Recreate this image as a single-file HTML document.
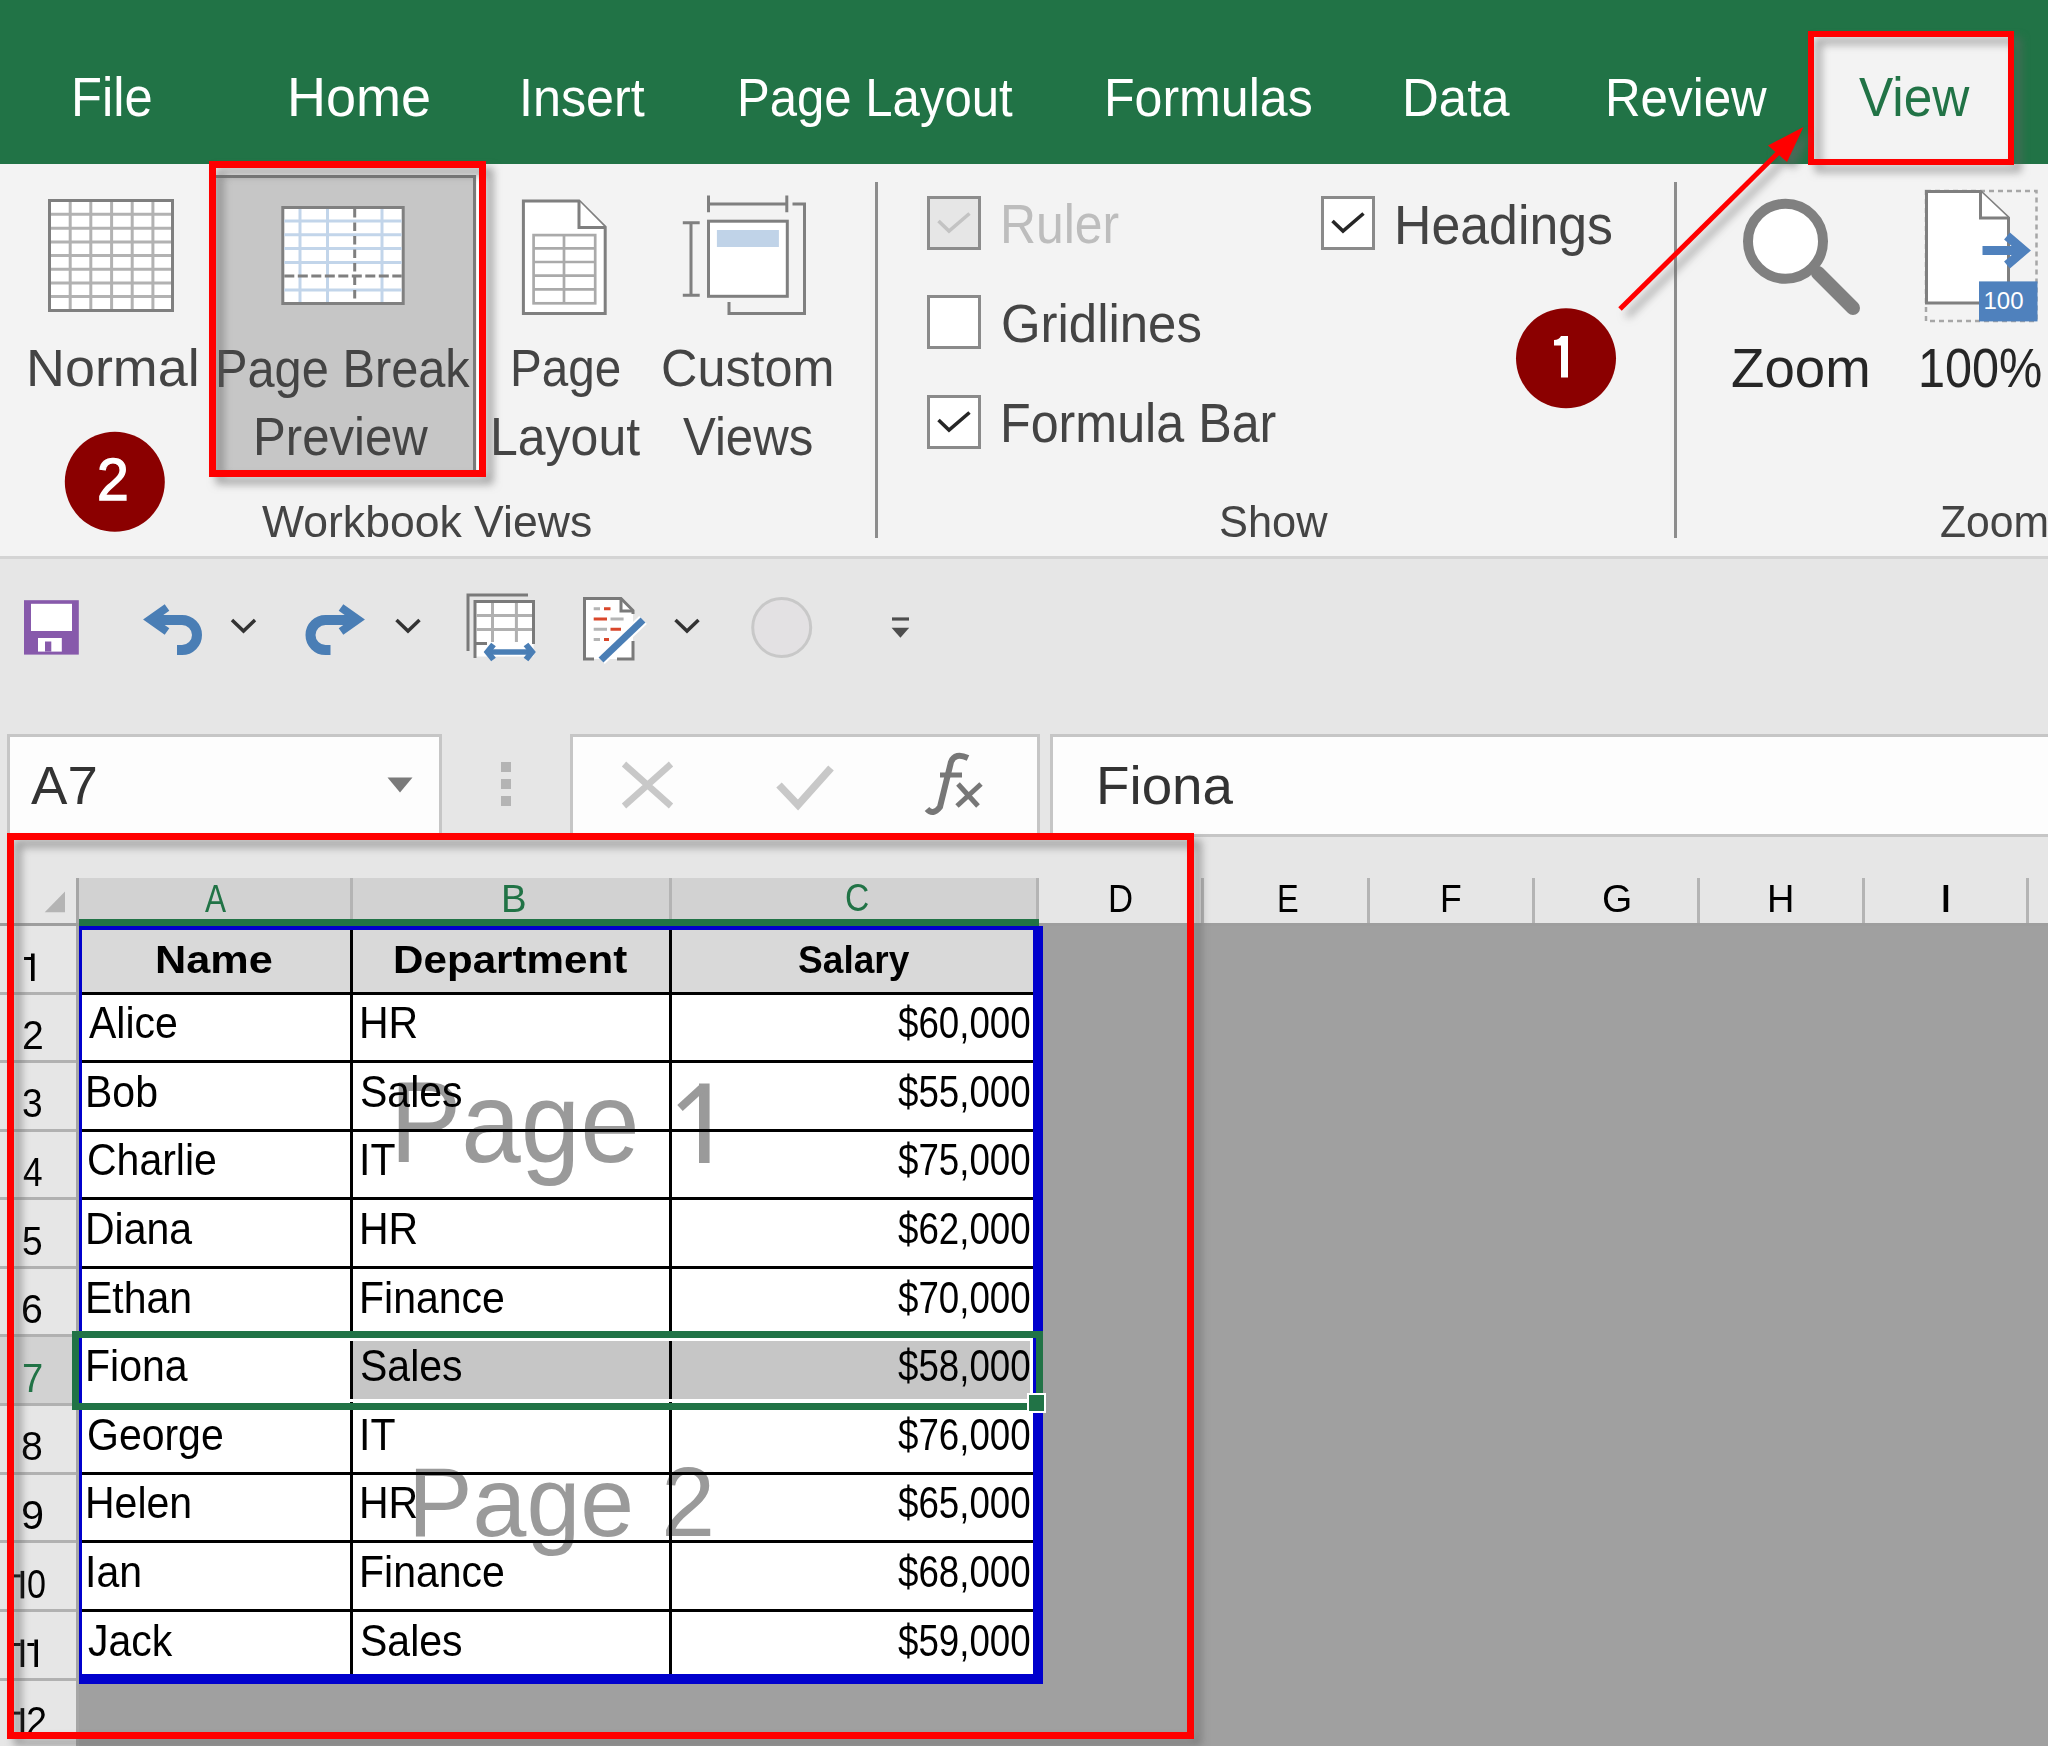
<!DOCTYPE html><html><head><meta charset="utf-8"><style>
html,body{margin:0;padding:0}
body{width:2048px;height:1746px;position:relative;overflow:hidden;background:#a0a0a0;font-family:'Liberation Sans',sans-serif}
.r{position:absolute}
.t{position:absolute;white-space:pre;transform-origin:0 0;font-family:'Liberation Sans',sans-serif}
svg{position:absolute;overflow:visible}
</style></head><body>
<div class=r style="left:0px;top:0px;width:2048px;height:164px;background:#217346;"></div>
<div class=r style="left:0px;top:164px;width:2048px;height:392px;background:#f3f3f3;"></div>
<div class=r style="left:0px;top:556px;width:2048px;height:3px;background:#d4d4d4;"></div>
<div class=r style="left:0px;top:559px;width:2048px;height:367px;background:#e6e6e6;"></div>
<div class=r style="left:1814px;top:37px;width:195px;height:127px;background:#f3f3f3;"></div>
<div class=r style="left:216px;top:175px;width:260px;height:295px;background:#c6c6c6;border-top:3px solid #7a7a7a;border-right:3px solid #7a7a7a;box-sizing:border-box"></div>
<div class=r style="left:476.5px;top:175px;width:3.5px;height:295px;background:#ffffff;"></div>
<div class=r style="left:875px;top:182px;width:3px;height:356px;background:#8c8c8c;"></div>
<div class=r style="left:1674px;top:182px;width:3px;height:356px;background:#8c8c8c;"></div>
<svg style="left:0;top:0" width="2048" height="600"><rect x="49.5" y="200.5" width="123" height="110" fill="#fff" stroke="#7f7f7f" stroke-width="3"/><line x1="70.2" y1="202" x2="70.2" y2="309" stroke="#b2b2b2" stroke-width="3"/><line x1="90.8" y1="202" x2="90.8" y2="309" stroke="#b2b2b2" stroke-width="3"/><line x1="111.6" y1="202" x2="111.6" y2="309" stroke="#b2b2b2" stroke-width="3"/><line x1="132.2" y1="202" x2="132.2" y2="309" stroke="#b2b2b2" stroke-width="3"/><line x1="152.9" y1="202" x2="152.9" y2="309" stroke="#b2b2b2" stroke-width="3"/><line x1="51" y1="214.2" x2="171" y2="214.2" stroke="#b2b2b2" stroke-width="3"/><line x1="51" y1="228.3" x2="171" y2="228.3" stroke="#b2b2b2" stroke-width="3"/><line x1="51" y1="241.9" x2="171" y2="241.9" stroke="#b2b2b2" stroke-width="3"/><line x1="51" y1="255.6" x2="171" y2="255.6" stroke="#b2b2b2" stroke-width="3"/><line x1="51" y1="269.3" x2="171" y2="269.3" stroke="#b2b2b2" stroke-width="3"/><line x1="51" y1="282.9" x2="171" y2="282.9" stroke="#b2b2b2" stroke-width="3"/><line x1="51" y1="296.6" x2="171" y2="296.6" stroke="#b2b2b2" stroke-width="3"/></svg>
<svg style="left:0;top:0" width="2048" height="600"><rect x="282.8" y="207.5" width="120.39999999999998" height="96" fill="#fff" stroke="#808080" stroke-width="3"/><line x1="300" y1="209" x2="300" y2="302" stroke="#c2d5ea" stroke-width="3"/><line x1="327.5" y1="209" x2="327.5" y2="302" stroke="#c2d5ea" stroke-width="3"/><line x1="382" y1="209" x2="382" y2="302" stroke="#c2d5ea" stroke-width="3"/><line x1="284.3" y1="221" x2="401.7" y2="221" stroke="#c2d5ea" stroke-width="3"/><line x1="284.3" y1="234.8" x2="401.7" y2="234.8" stroke="#c2d5ea" stroke-width="3"/><line x1="284.3" y1="248.4" x2="401.7" y2="248.4" stroke="#c2d5ea" stroke-width="3"/><line x1="284.3" y1="262.5" x2="401.7" y2="262.5" stroke="#c2d5ea" stroke-width="3"/><line x1="284.3" y1="290" x2="401.7" y2="290" stroke="#c2d5ea" stroke-width="3"/><line x1="354.7" y1="209" x2="354.7" y2="302" stroke="#7f7f7f" stroke-width="3" stroke-dasharray="8.5 5"/><line x1="284.3" y1="276" x2="401.7" y2="276" stroke="#7f7f7f" stroke-width="3" stroke-dasharray="10 3.5"/></svg>
<svg style="left:0;top:0" width="2048" height="600"><path d="M523.4 200.9 H579 L605.2 227 V313.5 H523.4 Z" fill="#fff" stroke="#7f7f7f" stroke-width="3"/><path d="M579 200.9 V227.5 H605.2" fill="#fff" stroke="#7f7f7f" stroke-width="3"/><rect x="533.6" y="235.1" width="61.6" height="68.2" fill="#fff" stroke="#aaaaaa" stroke-width="2.7"/><line x1="564" y1="235" x2="564" y2="304" stroke="#aaaaaa" stroke-width="2.7"/><line x1="534" y1="248.3" x2="595" y2="248.3" stroke="#aaaaaa" stroke-width="2.7"/><line x1="534" y1="262" x2="595" y2="262" stroke="#aaaaaa" stroke-width="2.7"/><line x1="534" y1="275.6" x2="595" y2="275.6" stroke="#aaaaaa" stroke-width="2.7"/><line x1="534" y1="289.4" x2="595" y2="289.4" stroke="#aaaaaa" stroke-width="2.7"/></svg>
<svg style="left:0;top:0" width="2048" height="600"><path d="M707 204 H788.3 M708.5 195.6 V212.3 M786.8 195.6 V212.3" stroke="#7f7f7f" stroke-width="3" fill="none"/><path d="M691 221.25 V296.7 M682.8 222.7 H699.7 M682.8 295.2 H699.7" stroke="#7f7f7f" stroke-width="3" fill="none"/><path d="M792.5 204 H804.5 V313.5 H729 V302" stroke="#7f7f7f" stroke-width="3" fill="none"/><rect x="708.5" y="221.2" width="78.8" height="75.1" fill="#fff" stroke="#7f7f7f" stroke-width="3"/><rect x="716.9" y="230" width="62" height="17" fill="#c0d3e8"/></svg>
<svg style="left:926.6px;top:195.6px" width="55" height="55"><rect x="1.5" y="1.5" width="51" height="51" fill="#e6e6e6" stroke="#8c8c8c" stroke-width="3"/><path d="M11.5 25 L22 35 L42.5 17.5" fill="none" stroke="#c3c3c3" stroke-width="3.6"/></svg>
<svg style="left:926.6px;top:295.3px" width="55" height="55"><rect x="1.5" y="1.5" width="51" height="51" fill="#ffffff" stroke="#8a8a8a" stroke-width="3"/></svg>
<svg style="left:926.6px;top:395.4px" width="55" height="55"><rect x="1.5" y="1.5" width="51" height="51" fill="#ffffff" stroke="#8a8a8a" stroke-width="3"/><path d="M11.5 25 L22 35 L42.5 17.5" fill="none" stroke="#262626" stroke-width="3.6"/></svg>
<svg style="left:1321px;top:195.6px" width="55" height="55"><rect x="1.5" y="1.5" width="51" height="51" fill="#ffffff" stroke="#8a8a8a" stroke-width="3"/><path d="M11.5 25 L22 35 L42.5 17.5" fill="none" stroke="#262626" stroke-width="3.6"/></svg>
<svg style="left:0;top:0" width="2048" height="600"><circle cx="1785.5" cy="241.3" r="37.5" fill="#fff" stroke="#808080" stroke-width="10"/><line x1="1818" y1="273" x2="1853" y2="308" stroke="#808080" stroke-width="14" stroke-linecap="round"/></svg>
<svg style="left:0;top:0" width="2048" height="600">
<rect x="1926" y="191" width="110.5" height="130" fill="none" stroke="#a6a6a6" stroke-width="2.5" stroke-dasharray="5 4"/>
<path d="M1926.5 191.5 H1980.5 L2008.5 218 V303 H1926.5 Z" fill="#fff" stroke="#7f7f7f" stroke-width="3"/>
<path d="M1980.5 191.5 V218 H2008.5" fill="#fff" stroke="#7f7f7f" stroke-width="3"/>
<rect x="1979" y="281.4" width="58.5" height="40" fill="#4f81bd"/>
<path d="M1982.5 250.5 H2022" fill="none" stroke="#4f81bd" stroke-width="9"/><path d="M2007 236 L2024 250.5 L2007 265" fill="none" stroke="#4f81bd" stroke-width="9"/>
</svg>
<div class=t style="left:1983.5px;top:289px;font-size:24px;line-height:24px;color:#fff;font-weight:normal;transform:scaleX(1.0)">100</div>
<svg style="left:0;top:0" width="2048" height="700">
<rect x="24" y="600.2" width="54.8" height="54.4" fill="#8759ab"/><rect x="31" y="603.8" width="41" height="27.2" fill="#fff"/><rect x="38" y="638" width="23.8" height="13.6" fill="#fff"/><rect x="45" y="641.5" width="6.3" height="10.1" fill="#8759ab"/>
<path d="M152 620 H182 A15 15 0 0 1 182 650 H177" fill="none" stroke="#4a7eb5" stroke-width="10"/><path d="M167 607.5 L150 619.5 L167 631.5" fill="none" stroke="#4a7eb5" stroke-width="8"/>
<path d="M232 620 L243.5 631 L255 620" fill="none" stroke="#333" stroke-width="3.5"/>
<path d="M355.5 620 H325.5 A15 15 0 0 0 325.5 650 H330.5" fill="none" stroke="#4a7eb5" stroke-width="10"/><path d="M341 607.5 L358 619.5 L341 631.5" fill="none" stroke="#4a7eb5" stroke-width="8"/>
<path d="M396.5 620 L408 631 L419.5 620" fill="none" stroke="#333" stroke-width="3.5"/>
<path d="M468 651 V595 H528" fill="none" stroke="#7a7a7a" stroke-width="3"/>
<rect x="475" y="601.5" width="58.5" height="55" fill="#fff"/>
<path d="M475 658 V601.5 H533.5 V644" fill="none" stroke="#7a7a7a" stroke-width="3"/>
<path d="M492.5 603 V642 M516.4 603 V642 M476.5 615.5 H532 M476.5 629.4 H532" stroke="#b0b0b0" stroke-width="3"/>
<path d="M476 643.5 H487" stroke="#7a7a7a" stroke-width="3"/>
<path d="M490 652 H530" fill="none" stroke="#4a7eb5" stroke-width="5.5"/><path d="M493.5 644.5 L487.5 652 L493.5 659.5 M526 644.5 L532 652 L526 659.5" fill="none" stroke="#4a7eb5" stroke-width="6"/>
<path d="M584.5 598.5 H621 L633 610.5 V659 H584.5 Z" fill="#fff" stroke="none"/>
<path d="M594 659 H584.5 V598.5 H621 L633 610.5 V614" fill="none" stroke="#7a7a7a" stroke-width="3"/>
<path d="M633 641 V659 H617" fill="none" stroke="#7a7a7a" stroke-width="3"/>
<path d="M621 598.5 V611 H633" fill="none" stroke="#7a7a7a" stroke-width="3"/>
<path d="M593.7 608.7 H600 M610.5 619 H623.6 M593.7 629.3 H607 M593.7 639.5 H600" stroke="#b4b4b4" stroke-width="3"/>
<path d="M604 608.7 H610.5 M593.7 619 H607 M610.5 629.3 H621 M604 639.5 H609" stroke="#d9472b" stroke-width="3"/>
<path d="M601 660 L643 620" stroke="#ffffff" stroke-width="11"/>
<path d="M601 660 L643 620" stroke="#4a7eb5" stroke-width="7"/>
<path d="M675.5 620 L687 631 L698.5 620" fill="none" stroke="#333" stroke-width="3.5"/>
<circle cx="781.7" cy="627.5" r="29" fill="#e3e1e3" stroke="#c8c8c8" stroke-width="3"/>
<path d="M892 619 H909" stroke="#4d4d4d" stroke-width="3.2"/>
<path d="M891.6 627.7 H909.2 L900.4 637.7 Z" fill="#4d4d4d"/>
</svg>
<div class=r style="left:7px;top:734px;width:435px;height:103px;background:#fdfdfd;border:3px solid #c6c6c6;box-sizing:border-box"></div>
<svg style="left:0;top:0" width="2048" height="900"><path d="M387.5 777.5 H412.5 L400 792.5 Z" fill="#7a7a7a"/></svg>
<div class=r style="left:501px;top:761.5px;width:10px;height:10px;background:#b4b4b4;"></div><div class=r style="left:501px;top:778.8px;width:10px;height:10px;background:#b4b4b4;"></div><div class=r style="left:501px;top:796px;width:10px;height:10px;background:#b4b4b4;"></div>
<div class=r style="left:569.5px;top:734px;width:470px;height:103px;background:#fdfdfd;border:3px solid #c6c6c6;box-sizing:border-box"></div>
<div class=r style="left:1050px;top:734px;width:1010px;height:103px;background:#fdfdfd;border:3px solid #c6c6c6;box-sizing:border-box"></div>
<svg style="left:0;top:0" width="2048" height="900">
<path d="M624 764 L671 806 M671 764 L624 806" stroke="#c8c8c8" stroke-width="6.5"/>
<path d="M779 785 L798 805 L831 768" fill="none" stroke="#c8c8c8" stroke-width="7.5"/>
<path d="M927 809 Q933 816 940 807 L951 762 Q955 752 968 758" fill="none" stroke="#777" stroke-width="6"/>
<path d="M940 775 H962" stroke="#777" stroke-width="5"/>
<path d="M958 784 L978 806 M981 784 L957 806" stroke="#777" stroke-width="5"/>
</svg>
<div class=r style="left:0px;top:878px;width:76px;height:45px;background:#e6e6e6;"></div>
<svg style="left:0;top:0" width="200" height="1000"><path d="M44.7 912.3 H65 V891.6 Z" fill="#b4b4b4"/></svg>
<div class=r style="left:79px;top:878px;width:960px;height:45px;background:#d2d2d2;"></div>
<div class=r style="left:1039px;top:878px;width:1009px;height:45px;background:#e6e6e6;"></div>
<div class=r style="left:350px;top:878px;width:3px;height:45px;background:#b4b4b4;"></div>
<div class=r style="left:669px;top:878px;width:3px;height:45px;background:#b4b4b4;"></div>
<div class=r style="left:1036px;top:878px;width:3px;height:45px;background:#b4b4b4;"></div>
<div class=r style="left:1201px;top:878px;width:3px;height:45px;background:#b4b4b4;"></div>
<div class=r style="left:1367px;top:878px;width:3px;height:45px;background:#b4b4b4;"></div>
<div class=r style="left:1532px;top:878px;width:3px;height:45px;background:#b4b4b4;"></div>
<div class=r style="left:1697px;top:878px;width:3px;height:45px;background:#b4b4b4;"></div>
<div class=r style="left:1862px;top:878px;width:3px;height:45px;background:#b4b4b4;"></div>
<div class=r style="left:2026px;top:878px;width:3px;height:45px;background:#b4b4b4;"></div>
<div class=r style="left:76px;top:878px;width:3px;height:48px;background:#a6a6a6;"></div>
<div class=r style="left:0px;top:923px;width:2048px;height:3px;background:#9e9e9e;"></div>
<div class=r style="left:79px;top:919px;width:960px;height:7px;background:#217346;"></div>
<div class=r style="left:0px;top:926px;width:76px;height:820px;background:#e6e6e6;"></div>
<div class=r style="left:0px;top:1334.0px;width:76px;height:68.6px;background:#d2d2d2;"></div>
<div class=r style="left:0px;top:992px;width:76px;height:3px;background:#b1b1b1;"></div>
<div class=r style="left:0px;top:1060px;width:76px;height:3px;background:#b1b1b1;"></div>
<div class=r style="left:0px;top:1129px;width:76px;height:3px;background:#b1b1b1;"></div>
<div class=r style="left:0px;top:1197px;width:76px;height:3px;background:#b1b1b1;"></div>
<div class=r style="left:0px;top:1266px;width:76px;height:3px;background:#b1b1b1;"></div>
<div class=r style="left:0px;top:1334px;width:76px;height:3px;background:#b1b1b1;"></div>
<div class=r style="left:0px;top:1403px;width:76px;height:3px;background:#b1b1b1;"></div>
<div class=r style="left:0px;top:1472px;width:76px;height:3px;background:#b1b1b1;"></div>
<div class=r style="left:0px;top:1540px;width:76px;height:3px;background:#b1b1b1;"></div>
<div class=r style="left:0px;top:1609px;width:76px;height:3px;background:#b1b1b1;"></div>
<div class=r style="left:0px;top:1678px;width:76px;height:3px;background:#b1b1b1;"></div>
<div class=r style="left:76px;top:926px;width:3px;height:820px;background:#a6a6a6;"></div>
<div class=r style="left:82px;top:930px;width:951px;height:61.5px;background:#d9d9d9;"></div>
<div class=r style="left:82px;top:994.5px;width:951px;height:680px;background:#ffffff;"></div>
<div class=r style="left:353px;top:1341px;width:677px;height:58px;background:#c6c6c6;"></div>
<div class=t style="left:389.65px;top:1065.07px;font-size:115.217px;line-height:115.217px;color:#9a9a9a;font-weight:normal;transform:scaleX(0.9282);">Page</div>
<div class=t style="left:407.84px;top:1452.53px;font-size:98.551px;line-height:98.551px;color:#9a9a9a;font-weight:normal;transform:scaleX(0.9829);">Page 2</div>
<svg style="left:0;top:0" width="2048" height="1746"><path d="M699 1083.5 H709.6 V1163 H699 Z" fill="#9a9a9a"/><path d="M680 1108 L703 1087" stroke="#9a9a9a" stroke-width="8"/></svg>
<div class=r style="left:350px;top:930px;width:3px;height:744px;background:#000000;"></div>
<div class=r style="left:669.2px;top:930px;width:3px;height:744px;background:#000000;"></div>
<div class=r style="left:82px;top:992px;width:951px;height:3px;background:#000000;"></div>
<div class=r style="left:82px;top:1060px;width:951px;height:3px;background:#000000;"></div>
<div class=r style="left:82px;top:1129px;width:951px;height:3px;background:#000000;"></div>
<div class=r style="left:82px;top:1197px;width:951px;height:3px;background:#000000;"></div>
<div class=r style="left:82px;top:1266px;width:951px;height:3px;background:#000000;"></div>
<div class=r style="left:82px;top:1334px;width:951px;height:3px;background:#000000;"></div>
<div class=r style="left:82px;top:1403px;width:951px;height:3px;background:#000000;"></div>
<div class=r style="left:82px;top:1472px;width:951px;height:3px;background:#000000;"></div>
<div class=r style="left:82px;top:1540px;width:951px;height:3px;background:#000000;"></div>
<div class=r style="left:82px;top:1609px;width:951px;height:3px;background:#000000;"></div>
<div class=r style="left:79px;top:1338px;width:954px;height:3px;background:#ffffff;"></div><div class=r style="left:79px;top:1399px;width:954px;height:3px;background:#ffffff;"></div><div class=r style="left:1030px;top:1338px;width:3px;height:64px;background:#ffffff;"></div>
<div class=t style="left:31.00px;top:760.04px;font-size:52.899px;line-height:52.899px;color:#333333;font-weight:normal;transform:scaleX(1.0323);">A7</div>
<div class=t style="left:205.00px;top:878.74px;font-size:39.130px;line-height:39.130px;color:#217346;font-weight:normal;transform:scaleX(0.8077);">A</div>
<div class=t style="left:501.06px;top:878.74px;font-size:39.130px;line-height:39.130px;color:#217346;font-weight:normal;transform:scaleX(0.9810);">B</div>
<div class=t style="left:845.25px;top:879.36px;font-size:38.406px;line-height:38.406px;color:#217346;font-weight:normal;transform:scaleX(0.8750);">C</div>
<div class=t style="left:1108.38px;top:878.65px;font-size:39.710px;line-height:39.710px;color:#000000;font-weight:normal;transform:scaleX(0.8750);">D</div>
<div class=t style="left:1276.55px;top:878.65px;font-size:39.710px;line-height:39.710px;color:#000000;font-weight:normal;transform:scaleX(0.8182);">E</div>
<div class=t style="left:1440.02px;top:878.65px;font-size:39.710px;line-height:39.710px;color:#000000;font-weight:normal;transform:scaleX(0.8950);">F</div>
<div class=t style="left:1602.04px;top:878.65px;font-size:39.710px;line-height:39.710px;color:#000000;font-weight:normal;transform:scaleX(0.9808);">G</div>
<div class=t style="left:1767.13px;top:878.65px;font-size:39.710px;line-height:39.710px;color:#000000;font-weight:normal;transform:scaleX(0.9565);">H</div>
<div class=t style="left:1939.00px;top:878.65px;font-size:39.710px;line-height:39.710px;color:#000000;font-weight:normal;transform:scaleX(1.2500);">I</div>
<div class=t style="left:22.03px;top:1015.72px;font-size:39.855px;line-height:39.855px;color:#000000;font-weight:normal;transform:scaleX(0.9833);">2</div>
<div class=t style="left:22.14px;top:1084.32px;font-size:39.855px;line-height:39.855px;color:#000000;font-weight:normal;transform:scaleX(0.9316);">3</div>
<div class=t style="left:23.11px;top:1152.92px;font-size:39.855px;line-height:39.855px;color:#000000;font-weight:normal;transform:scaleX(0.8850);">4</div>
<div class=t style="left:22.14px;top:1221.52px;font-size:39.855px;line-height:39.855px;color:#000000;font-weight:normal;transform:scaleX(0.9316);">5</div>
<div class=t style="left:21.03px;top:1290.12px;font-size:39.855px;line-height:39.855px;color:#000000;font-weight:normal;transform:scaleX(0.9842);">6</div>
<div class=t style="left:22.09px;top:1358.72px;font-size:39.855px;line-height:39.855px;color:#217346;font-weight:normal;transform:scaleX(0.9556);">7</div>
<div class=t style="left:21.03px;top:1427.32px;font-size:39.855px;line-height:39.855px;color:#000000;font-weight:normal;transform:scaleX(0.9842);">8</div>
<div class=t style="left:20.92px;top:1495.92px;font-size:39.855px;line-height:39.855px;color:#000000;font-weight:normal;transform:scaleX(1.0389);">9</div>
<div class=t style="left:26.84px;top:1564.52px;font-size:39.855px;line-height:39.855px;color:#000000;font-weight:normal;transform:scaleX(0.8550);">0</div>
<div class=t style="left:25.80px;top:1701.72px;font-size:39.855px;line-height:39.855px;color:#000000;font-weight:normal;transform:scaleX(0.9500);">2</div>
<div class=t style="left:154.65px;top:940.80px;font-size:38.768px;line-height:38.768px;color:#000000;font-weight:bold;transform:scaleX(1.1158);">Name</div>
<div class=t style="left:393.14px;top:940.80px;font-size:38.768px;line-height:38.768px;color:#000000;font-weight:bold;transform:scaleX(1.0877);">Department</div>
<div class=t style="left:798.44px;top:940.80px;font-size:38.768px;line-height:38.768px;color:#000000;font-weight:bold;transform:scaleX(0.9574);">Salary</div>
<div class=t style="left:88.90px;top:1001.21px;font-size:44.928px;line-height:44.928px;color:#000000;font-weight:normal;transform:scaleX(0.9126);">Alice</div>
<div class=t style="left:358.65px;top:1001.21px;font-size:44.928px;line-height:44.928px;color:#000000;font-weight:normal;transform:scaleX(0.9126);">HR</div>
<div class=t style="left:897.58px;top:1001.21px;font-size:44.928px;line-height:44.928px;color:#000000;font-weight:normal;transform:scaleX(0.8175);">$60,000</div>
<div class=t style="left:85.25px;top:1069.81px;font-size:44.928px;line-height:44.928px;color:#000000;font-weight:normal;transform:scaleX(0.9126);">Bob</div>
<div class=t style="left:360.47px;top:1069.81px;font-size:44.928px;line-height:44.928px;color:#000000;font-weight:normal;transform:scaleX(0.9126);">Sales</div>
<div class=t style="left:897.58px;top:1069.81px;font-size:44.928px;line-height:44.928px;color:#000000;font-weight:normal;transform:scaleX(0.8175);">$55,000</div>
<div class=t style="left:87.07px;top:1138.41px;font-size:44.928px;line-height:44.928px;color:#000000;font-weight:normal;transform:scaleX(0.9126);">Charlie</div>
<div class=t style="left:358.65px;top:1138.41px;font-size:44.928px;line-height:44.928px;color:#000000;font-weight:normal;transform:scaleX(0.9126);">IT</div>
<div class=t style="left:897.58px;top:1138.41px;font-size:44.928px;line-height:44.928px;color:#000000;font-weight:normal;transform:scaleX(0.8175);">$75,000</div>
<div class=t style="left:85.25px;top:1207.01px;font-size:44.928px;line-height:44.928px;color:#000000;font-weight:normal;transform:scaleX(0.9126);">Diana</div>
<div class=t style="left:358.65px;top:1207.01px;font-size:44.928px;line-height:44.928px;color:#000000;font-weight:normal;transform:scaleX(0.9126);">HR</div>
<div class=t style="left:897.58px;top:1207.01px;font-size:44.928px;line-height:44.928px;color:#000000;font-weight:normal;transform:scaleX(0.8175);">$62,000</div>
<div class=t style="left:85.25px;top:1275.61px;font-size:44.928px;line-height:44.928px;color:#000000;font-weight:normal;transform:scaleX(0.9126);">Ethan</div>
<div class=t style="left:358.65px;top:1275.61px;font-size:44.928px;line-height:44.928px;color:#000000;font-weight:normal;transform:scaleX(0.9126);">Finance</div>
<div class=t style="left:897.58px;top:1275.61px;font-size:44.928px;line-height:44.928px;color:#000000;font-weight:normal;transform:scaleX(0.8175);">$70,000</div>
<div class=t style="left:85.25px;top:1344.21px;font-size:44.928px;line-height:44.928px;color:#000000;font-weight:normal;transform:scaleX(0.9126);">Fiona</div>
<div class=t style="left:360.47px;top:1344.21px;font-size:44.928px;line-height:44.928px;color:#000000;font-weight:normal;transform:scaleX(0.9126);">Sales</div>
<div class=t style="left:897.58px;top:1344.21px;font-size:44.928px;line-height:44.928px;color:#000000;font-weight:normal;transform:scaleX(0.8175);">$58,000</div>
<div class=t style="left:87.07px;top:1412.81px;font-size:44.928px;line-height:44.928px;color:#000000;font-weight:normal;transform:scaleX(0.9126);">George</div>
<div class=t style="left:358.65px;top:1412.81px;font-size:44.928px;line-height:44.928px;color:#000000;font-weight:normal;transform:scaleX(0.9126);">IT</div>
<div class=t style="left:897.58px;top:1412.81px;font-size:44.928px;line-height:44.928px;color:#000000;font-weight:normal;transform:scaleX(0.8175);">$76,000</div>
<div class=t style="left:85.25px;top:1481.41px;font-size:44.928px;line-height:44.928px;color:#000000;font-weight:normal;transform:scaleX(0.9126);">Helen</div>
<div class=t style="left:358.65px;top:1481.41px;font-size:44.928px;line-height:44.928px;color:#000000;font-weight:normal;transform:scaleX(0.9126);">HR</div>
<div class=t style="left:897.58px;top:1481.41px;font-size:44.928px;line-height:44.928px;color:#000000;font-weight:normal;transform:scaleX(0.8175);">$65,000</div>
<div class=t style="left:85.25px;top:1550.01px;font-size:44.928px;line-height:44.928px;color:#000000;font-weight:normal;transform:scaleX(0.9126);">Ian</div>
<div class=t style="left:358.65px;top:1550.01px;font-size:44.928px;line-height:44.928px;color:#000000;font-weight:normal;transform:scaleX(0.9126);">Finance</div>
<div class=t style="left:897.58px;top:1550.01px;font-size:44.928px;line-height:44.928px;color:#000000;font-weight:normal;transform:scaleX(0.8175);">$68,000</div>
<div class=t style="left:87.99px;top:1618.61px;font-size:44.928px;line-height:44.928px;color:#000000;font-weight:normal;transform:scaleX(0.9126);">Jack</div>
<div class=t style="left:360.47px;top:1618.61px;font-size:44.928px;line-height:44.928px;color:#000000;font-weight:normal;transform:scaleX(0.9126);">Sales</div>
<div class=t style="left:897.58px;top:1618.61px;font-size:44.928px;line-height:44.928px;color:#000000;font-weight:normal;transform:scaleX(0.8175);">$59,000</div>
<svg style="left:0;top:0" width="200" height="1746"><rect x="31" y="953.5" width="3.6" height="27.5" fill="#000"/><rect x="24" y="957.0" width="7" height="3" fill="#000"/><rect x="20.6" y="1570.9" width="3.6" height="27.5" fill="#000"/><rect x="13.600000000000001" y="1574.4" width="7" height="3" fill="#000"/><rect x="20.6" y="1639.5" width="3.6" height="27.5" fill="#000"/><rect x="13.600000000000001" y="1643.0" width="7" height="3" fill="#000"/><rect x="34.4" y="1639.5" width="3.6" height="27.5" fill="#000"/><rect x="27.4" y="1643.0" width="7" height="3" fill="#000"/><rect x="20.6" y="1708.1" width="3.6" height="27.5" fill="#000"/><rect x="13.600000000000001" y="1711.6" width="7" height="3" fill="#000"/></svg>
<div class=r style="left:79px;top:926px;width:964px;height:758px;background:transparent;border-left:3.5px solid #0000cd;border-top:4px solid #0000cd;border-right:10px solid #0000cd;border-bottom:10px solid #0000cd;box-sizing:border-box"></div>
<div class=r style="left:72px;top:1331px;width:971px;height:79px;background:transparent;border:7px solid #217346;box-sizing:border-box"></div>
<div class=r style="left:1027px;top:1393px;width:19px;height:20px;background:#217346;border:2px solid #fff;box-sizing:border-box"></div>
<div class=t style="left:70.73px;top:69.67px;font-size:55.217px;line-height:55.217px;color:#ffffff;font-weight:normal;transform:scaleX(0.9181);">File</div>
<div class=t style="left:287.09px;top:69.67px;font-size:55.217px;line-height:55.217px;color:#ffffff;font-weight:normal;transform:scaleX(0.9787);">Home</div>
<div class=t style="left:519.35px;top:70.35px;font-size:54.058px;line-height:54.058px;color:#ffffff;font-weight:normal;transform:scaleX(0.9308);">Insert</div>
<div class=t style="left:736.77px;top:70.35px;font-size:54.058px;line-height:54.058px;color:#ffffff;font-weight:normal;transform:scaleX(0.9084);">Page Layout</div>
<div class=t style="left:1103.69px;top:70.35px;font-size:54.058px;line-height:54.058px;color:#ffffff;font-weight:normal;transform:scaleX(0.9265);">Formulas</div>
<div class=t style="left:1402.23px;top:70.35px;font-size:54.058px;line-height:54.058px;color:#ffffff;font-weight:normal;transform:scaleX(0.9427);">Data</div>
<div class=t style="left:1604.85px;top:70.35px;font-size:54.058px;line-height:54.058px;color:#ffffff;font-weight:normal;transform:scaleX(0.9127);">Review</div>
<div class=t style="left:1859.00px;top:70.19px;font-size:55.072px;line-height:55.072px;color:#217346;font-weight:normal;transform:scaleX(0.9322);">View</div>
<div class=t style="left:25.81px;top:342.77px;font-size:51.449px;line-height:51.449px;color:#444444;font-weight:normal;transform:scaleX(1.0475);">Normal</div>
<div class=t style="left:215.40px;top:341.33px;font-size:54.203px;line-height:54.203px;color:#444444;font-weight:normal;transform:scaleX(0.8996);">Page Break</div>
<div class=t style="left:253.34px;top:409.80px;font-size:53.768px;line-height:53.768px;color:#444444;font-weight:normal;transform:scaleX(0.9144);">Preview</div>
<div class=t style="left:509.80px;top:342.77px;font-size:51.449px;line-height:51.449px;color:#444444;font-weight:normal;transform:scaleX(0.9254);">Page</div>
<div class=t style="left:490.28px;top:409.80px;font-size:53.768px;line-height:53.768px;color:#444444;font-weight:normal;transform:scaleX(0.9299);">Layout</div>
<div class=t style="left:661.06px;top:342.77px;font-size:51.449px;line-height:51.449px;color:#444444;font-weight:normal;transform:scaleX(0.9795);">Custom</div>
<div class=t style="left:683.00px;top:409.80px;font-size:53.768px;line-height:53.768px;color:#444444;font-weight:normal;transform:scaleX(0.9149);">Views</div>
<div class=t style="left:262.00px;top:501.04px;font-size:43.478px;line-height:43.478px;color:#444444;font-weight:normal;transform:scaleX(1.0249);">Workbook Views</div>
<div class=t style="left:1000.12px;top:196.60px;font-size:55.652px;line-height:55.652px;color:#bdbdbd;font-weight:normal;transform:scaleX(0.8961);">Ruler</div>
<div class=t style="left:1001.16px;top:297.00px;font-size:53.768px;line-height:53.768px;color:#444444;font-weight:normal;transform:scaleX(0.9469);">Gridlines</div>
<div class=t style="left:1000.38px;top:395.62px;font-size:55.507px;line-height:55.507px;color:#444444;font-weight:normal;transform:scaleX(0.9050);">Formula Bar</div>
<div class=t style="left:1394.28px;top:196.57px;font-size:55.797px;line-height:55.797px;color:#444444;font-weight:normal;transform:scaleX(0.9291);">Headings</div>
<div class=t style="left:1219.04px;top:500.23px;font-size:44.203px;line-height:44.203px;color:#444444;font-weight:normal;transform:scaleX(0.9817);">Show</div>
<div class=t style="left:1730.81px;top:341.19px;font-size:55.072px;line-height:55.072px;color:#262626;font-weight:normal;transform:scaleX(0.9926);">Zoom</div>
<div class=t style="left:1918.27px;top:341.19px;font-size:55.072px;line-height:55.072px;color:#262626;font-weight:normal;transform:scaleX(0.8830);">100%</div>
<div class=t style="left:1940.02px;top:501.04px;font-size:43.478px;line-height:43.478px;color:#444444;font-weight:normal;transform:scaleX(0.9817);">Zoom</div>
<div class=t style="left:1095.77px;top:758.80px;font-size:54.348px;line-height:54.348px;color:#333333;font-weight:normal;transform:scaleX(1.0083);">Fiona</div>
<div class=r style="left:1808px;top:31px;width:206px;height:134px;background:transparent;border:6.6px solid #ff0000;box-sizing:border-box;filter:drop-shadow(7px 7px 4px rgba(100,100,100,0.6))"></div>
<div class=r style="left:209.4px;top:161px;width:277px;height:316px;background:transparent;border:7px solid #ff0000;box-sizing:border-box;filter:drop-shadow(7px 7px 4px rgba(100,100,100,0.6))"></div>
<div class=r style="left:7px;top:833px;width:1187px;height:906px;background:transparent;border:7px solid #ff0000;box-sizing:border-box;filter:drop-shadow(7px 7px 4px rgba(100,100,100,0.6))"></div>
<svg style="left:0;top:0;filter:drop-shadow(7px 7px 4px rgba(100,100,100,0.6))" width="2048" height="400"><line x1="1620" y1="309" x2="1785" y2="146" stroke="#ff0000" stroke-width="5"/><path d="M1803.5 127 L1768 145.5 L1787 162 Z" fill="#ff0000"/></svg>
<svg style="left:0;top:0" width="2048" height="600"><circle cx="1566" cy="358.3" r="50" fill="#8b0000"/><circle cx="114.8" cy="481.8" r="50" fill="#8b0000"/></svg>
<div class=t style="left:97.39px;top:450.12px;font-size:59.855px;line-height:59.855px;color:#ffffff;font-weight:normal;transform:scaleX(0.9552);-webkit-text-stroke:1.4px currentColor;">2</div>
<svg style="left:0;top:0" width="2048" height="600"><path d="M1561 336 H1568 V377.4 H1561 V345.5 H1554 V340 Q1559 340 1561 336 Z" fill="#fff"/></svg>
</body></html>
